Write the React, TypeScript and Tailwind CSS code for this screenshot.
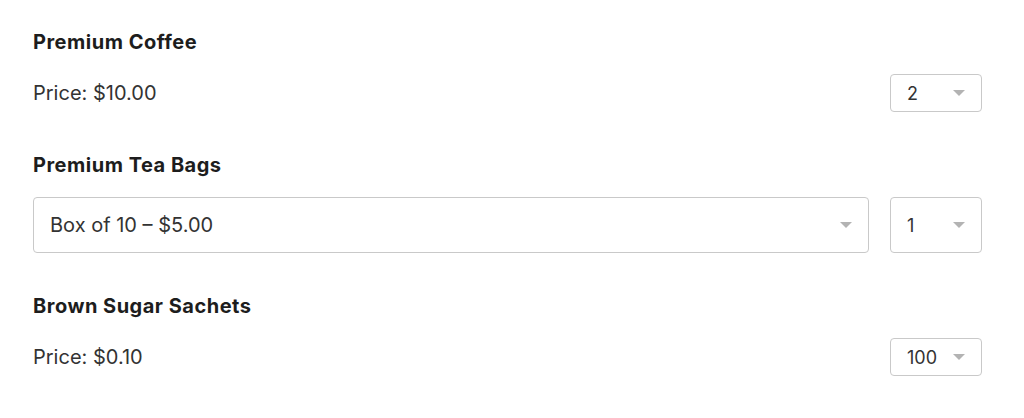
const Caret = () => (
  <svg width="12" height="6" viewBox="0 0 12 6" className="shrink-0">
    <path d="M0 0h12L6 6z" fill="#b3b3b3" />
  </svg>
);

function QtySelect({ value }: { value: string }) {
  return (
    <div className="flex w-[92px] h-full items-center justify-between rounded-[4px] border border-[#c9c9c9] bg-white pl-4 pr-4 text-[18px] text-[#333]">
      <span>{value}</span>
      <Caret />
    </div>
  );
}

const products = [
  { name: 'Premium Coffee', price: '$10.00', qty: '2' },
  { name: 'Premium Tea Bags', variant: 'Box of 10 – $5.00', qty: '1' },
  { name: 'Brown Sugar Sachets', price: '$0.10', qty: '100' },
];

export default function App() {
  return (
    <div className="min-h-screen bg-white px-[33px] pt-[30px] font-['Inter',sans-serif]">
      <div className="flex w-[949px] flex-col gap-[41px]">
        {products.map((p) => (
          <div key={p.name} className="flex flex-col gap-[20px]">
            <h2 className="text-[20px] font-bold leading-[24px] tracking-[0.025em] text-[#1d1d1d]">{p.name}</h2>
            {p.variant ? (
              <div className="flex h-[56px] gap-[21px]">
                <div className="flex flex-1 items-center justify-between rounded-[4px] border border-[#c9c9c9] bg-white pl-4 pr-4 text-[20px] text-[#333]">
                  <span>{p.variant}</span>
                  <Caret />
                </div>
                <QtySelect value={p.qty} />
              </div>
            ) : (
              <div className="flex h-[38px] items-center justify-between">
                <span className="text-[20px] text-[#333]">Price: {p.price}</span>
                <QtySelect value={p.qty} />
              </div>
            )}
          </div>
        ))}
      </div>
    </div>
  );
}
